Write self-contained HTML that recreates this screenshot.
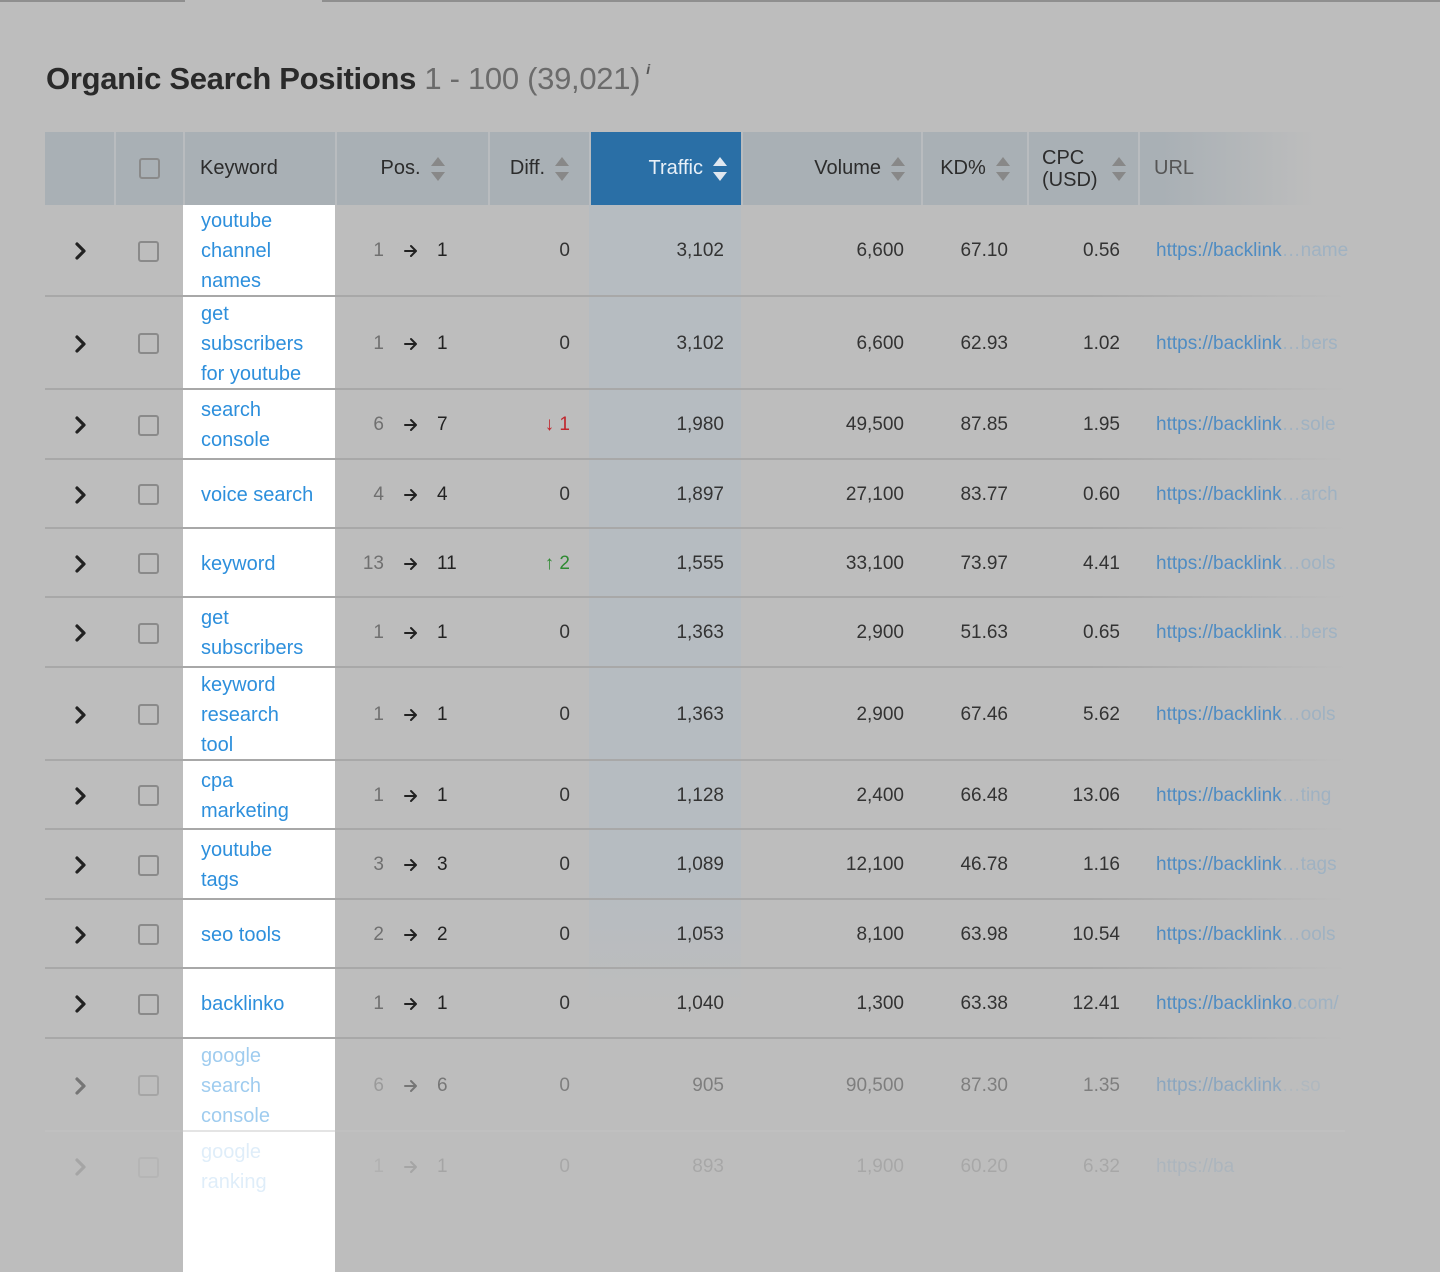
<!DOCTYPE html>
<html><head><meta charset="utf-8"><style>
*{margin:0;padding:0;box-sizing:border-box}
body{width:1440px;height:1272px;background:#bdbdbd;font-family:"Liberation Sans",sans-serif;position:relative;overflow:hidden;color:#333}
.abs{position:absolute}
.topl{top:0;height:2px;background:#8f8f8f}
h1{position:absolute;left:46px;top:61px;font-size:31px;font-weight:bold;color:#2a2a2a;letter-spacing:-0.3px;white-space:nowrap}
h1 span{font-weight:normal;color:#6b6b6b}
h1 sup{font-size:14px;font-style:italic;color:#555;vertical-align:top;margin-left:6px}
.head{position:absolute;left:45px;top:132px;width:1270px;height:73px;background:linear-gradient(90deg,#a9b0b5 0,#a9b0b5 88%,#bdbdbd 100%)}
.hc{position:absolute;top:0;height:73px;display:flex;align-items:center;font-size:20px;color:#2c2c2c;border-left:2px solid #b9bcbf}
.sort{display:inline-block;width:14px;margin-left:10px;position:relative;height:24px}
.sort:before{content:"";position:absolute;left:0;top:0;border-left:7px solid transparent;border-right:7px solid transparent;border-bottom:9px solid #888}
.sort:after{content:"";position:absolute;left:0;bottom:0;border-left:7px solid transparent;border-right:7px solid transparent;border-top:9px solid #888}
.traf{background:#2a6fa6;color:#e8f0f8}
.traf .sort:before{border-bottom-color:#e0e8f0}.traf .sort:after{border-top-color:#e0e8f0}
.kwcol{position:absolute;left:183px;top:205px;width:152px;height:1067px;background:#fff}
.tcol{position:absolute;left:589px;top:205px;width:152px;height:800px;background:linear-gradient(#b6bcc1 85%,#bdbdbd)}
.row{position:absolute;left:45px;width:1300px;border-bottom:2px solid transparent;border-image:linear-gradient(90deg,#a8a8a8 80%,rgba(168,168,168,0)) 1}
.c{position:absolute;top:2px;bottom:0;display:flex;align-items:center;font-size:19px;white-space:nowrap}
.r{justify-content:flex-end}
.chev{left:27px;width:16px;justify-content:center}
.cb{left:93px}
.cb i{display:block;width:21px;height:21px;border:2px solid #8a8a8a;border-radius:3px}
.kw{left:156px;width:135px;color:#2d8fdc;font-size:20px;line-height:30px}
.po{left:290px;width:49px;color:#707070}
.ar{left:358px}
.pn{left:392px;color:#222}
.df{left:450px;width:75px}
.tr{left:550px;width:129px}
.vo{left:720px;width:139px}
.kd{left:880px;width:83px}
.cp{left:990px;width:85px}
.ur{left:1111px;color:#4f8cc2}
.ur b{font-weight:normal;color:#9fb2c2}
.red{color:#c0262d}.grn{color:#2f8a32}
</style></head><body>
<svg width="0" height="0" style="position:absolute"><defs>
<symbol id="ch" viewBox="0 0 12 18"><path d="M3 2l7 7-7 7" fill="none" stroke="#222" stroke-width="3.2" stroke-linecap="round" stroke-linejoin="round"/></symbol>
<symbol id="ar" viewBox="0 0 16 14"><path d="M2 7h11M8 2l5 5-5 5" fill="none" stroke="#222" stroke-width="2" stroke-linecap="round" stroke-linejoin="round"/></symbol>
</defs></svg>
<div class="abs topl" style="left:0;width:185px"></div>
<div class="abs topl" style="left:322px;width:1118px"></div>
<h1>Organic Search Positions <span>1 - 100 (39,021)</span><sup>i</sup></h1>
<div class="head">
<div class="hc" style="left:69px;width:69px;justify-content:center"><i style="display:block;width:21px;height:21px;border:2px solid #8a8a8a;border-radius:3px"></i></div>
<div class="hc" style="left:138px;width:152px;padding-left:15px">Keyword</div>
<div class="hc" style="left:290px;width:153px;justify-content:center">Pos.<span class="sort"></span></div>
<div class="hc" style="left:443px;width:101px;justify-content:center">Diff.<span class="sort"></span></div>
<div class="hc traf" style="left:544px;width:152px;justify-content:flex-end;padding-right:14px">Traffic<span class="sort"></span></div>
<div class="hc" style="left:696px;width:180px;justify-content:flex-end;padding-right:16px">Volume<span class="sort"></span></div>
<div class="hc" style="left:876px;width:106px;justify-content:center">KD%<span class="sort"></span></div>
<div class="hc" style="left:982px;width:111px;padding-left:13px;line-height:22px">CPC<br>(USD)<span class="sort" style="margin-left:14px"></span></div>
<div class="hc" style="left:1093px;width:177px;padding-left:14px;color:#555">URL</div>
</div>
<div class="tcol"></div>
<div class="kwcol"></div>

<div class="row" style="top:205px;height:92px"><div class="c chev"><svg width="12" height="18"><use href="#ch"/></svg></div><div class="c cb"><i></i></div><div class="c kw">youtube<br>channel<br>names</div><div class="c po r">1</div><div class="c ar"><svg width="16" height="14"><use href="#ar"/></svg></div><div class="c pn">1</div><div class="c df r">0</div><div class="c tr r">3,102</div><div class="c vo r">6,600</div><div class="c kd r">67.10</div><div class="c cp r">0.56</div><div class="c ur">https://backlink<b>…name</b></div></div>
<div class="row" style="top:297px;height:93px"><div class="c chev"><svg width="12" height="18"><use href="#ch"/></svg></div><div class="c cb"><i></i></div><div class="c kw">get<br>subscribers<br>for youtube</div><div class="c po r">1</div><div class="c ar"><svg width="16" height="14"><use href="#ar"/></svg></div><div class="c pn">1</div><div class="c df r">0</div><div class="c tr r">3,102</div><div class="c vo r">6,600</div><div class="c kd r">62.93</div><div class="c cp r">1.02</div><div class="c ur">https://backlink<b>…bers</b></div></div>
<div class="row" style="top:390px;height:70px"><div class="c chev"><svg width="12" height="18"><use href="#ch"/></svg></div><div class="c cb"><i></i></div><div class="c kw">search<br>console</div><div class="c po r">6</div><div class="c ar"><svg width="16" height="14"><use href="#ar"/></svg></div><div class="c pn">7</div><div class="c df r red">↓ 1</div><div class="c tr r">1,980</div><div class="c vo r">49,500</div><div class="c kd r">87.85</div><div class="c cp r">1.95</div><div class="c ur">https://backlink<b>…sole</b></div></div>
<div class="row" style="top:460px;height:69px"><div class="c chev"><svg width="12" height="18"><use href="#ch"/></svg></div><div class="c cb"><i></i></div><div class="c kw">voice search</div><div class="c po r">4</div><div class="c ar"><svg width="16" height="14"><use href="#ar"/></svg></div><div class="c pn">4</div><div class="c df r">0</div><div class="c tr r">1,897</div><div class="c vo r">27,100</div><div class="c kd r">83.77</div><div class="c cp r">0.60</div><div class="c ur">https://backlink<b>…arch</b></div></div>
<div class="row" style="top:529px;height:69px"><div class="c chev"><svg width="12" height="18"><use href="#ch"/></svg></div><div class="c cb"><i></i></div><div class="c kw">keyword</div><div class="c po r">13</div><div class="c ar"><svg width="16" height="14"><use href="#ar"/></svg></div><div class="c pn">11</div><div class="c df r grn">↑ 2</div><div class="c tr r">1,555</div><div class="c vo r">33,100</div><div class="c kd r">73.97</div><div class="c cp r">4.41</div><div class="c ur">https://backlink<b>…ools</b></div></div>
<div class="row" style="top:598px;height:70px"><div class="c chev"><svg width="12" height="18"><use href="#ch"/></svg></div><div class="c cb"><i></i></div><div class="c kw">get<br>subscribers</div><div class="c po r">1</div><div class="c ar"><svg width="16" height="14"><use href="#ar"/></svg></div><div class="c pn">1</div><div class="c df r">0</div><div class="c tr r">1,363</div><div class="c vo r">2,900</div><div class="c kd r">51.63</div><div class="c cp r">0.65</div><div class="c ur">https://backlink<b>…bers</b></div></div>
<div class="row" style="top:668px;height:93px"><div class="c chev"><svg width="12" height="18"><use href="#ch"/></svg></div><div class="c cb"><i></i></div><div class="c kw">keyword<br>research<br>tool</div><div class="c po r">1</div><div class="c ar"><svg width="16" height="14"><use href="#ar"/></svg></div><div class="c pn">1</div><div class="c df r">0</div><div class="c tr r">1,363</div><div class="c vo r">2,900</div><div class="c kd r">67.46</div><div class="c cp r">5.62</div><div class="c ur">https://backlink<b>…ools</b></div></div>
<div class="row" style="top:761px;height:69px"><div class="c chev"><svg width="12" height="18"><use href="#ch"/></svg></div><div class="c cb"><i></i></div><div class="c kw">cpa<br>marketing</div><div class="c po r">1</div><div class="c ar"><svg width="16" height="14"><use href="#ar"/></svg></div><div class="c pn">1</div><div class="c df r">0</div><div class="c tr r">1,128</div><div class="c vo r">2,400</div><div class="c kd r">66.48</div><div class="c cp r">13.06</div><div class="c ur">https://backlink<b>…ting</b></div></div>
<div class="row" style="top:830px;height:70px"><div class="c chev"><svg width="12" height="18"><use href="#ch"/></svg></div><div class="c cb"><i></i></div><div class="c kw">youtube<br>tags</div><div class="c po r">3</div><div class="c ar"><svg width="16" height="14"><use href="#ar"/></svg></div><div class="c pn">3</div><div class="c df r">0</div><div class="c tr r">1,089</div><div class="c vo r">12,100</div><div class="c kd r">46.78</div><div class="c cp r">1.16</div><div class="c ur">https://backlink<b>…tags</b></div></div>
<div class="row" style="top:900px;height:69px"><div class="c chev"><svg width="12" height="18"><use href="#ch"/></svg></div><div class="c cb"><i></i></div><div class="c kw">seo tools</div><div class="c po r">2</div><div class="c ar"><svg width="16" height="14"><use href="#ar"/></svg></div><div class="c pn">2</div><div class="c df r">0</div><div class="c tr r">1,053</div><div class="c vo r">8,100</div><div class="c kd r">63.98</div><div class="c cp r">10.54</div><div class="c ur">https://backlink<b>…ools</b></div></div>
<div class="row" style="top:969px;height:70px"><div class="c chev"><svg width="12" height="18"><use href="#ch"/></svg></div><div class="c cb"><i></i></div><div class="c kw">backlinko</div><div class="c po r">1</div><div class="c ar"><svg width="16" height="14"><use href="#ar"/></svg></div><div class="c pn">1</div><div class="c df r">0</div><div class="c tr r">1,040</div><div class="c vo r">1,300</div><div class="c kd r">63.38</div><div class="c cp r">12.41</div><div class="c ur">https://backlinko<b>.com/</b></div></div>
<div class="row" style="top:1039px;height:93px;opacity:.45;border-image:none;border-bottom-color:#c4c4c4"><div class="c chev"><svg width="12" height="18"><use href="#ch"/></svg></div><div class="c cb"><i></i></div><div class="c kw">google<br>search<br>console</div><div class="c po r">6</div><div class="c ar"><svg width="16" height="14"><use href="#ar"/></svg></div><div class="c pn">6</div><div class="c df r">0</div><div class="c tr r">905</div><div class="c vo r">90,500</div><div class="c kd r">87.30</div><div class="c cp r">1.35</div><div class="c ur">https://backlink<b>…so</b></div></div>
<div class="row" style="top:1136px;height:60px;opacity:.15;border:none"><div class="c chev"><svg width="12" height="18"><use href="#ch"/></svg></div><div class="c cb"><i></i></div><div class="c kw">google<br>ranking</div><div class="c po r">1</div><div class="c ar"><svg width="16" height="14"><use href="#ar"/></svg></div><div class="c pn">1</div><div class="c df r">0</div><div class="c tr r">893</div><div class="c vo r">1,900</div><div class="c kd r">60.20</div><div class="c cp r">6.32</div><div class="c ur">https://ba</div></div>
</body></html>
